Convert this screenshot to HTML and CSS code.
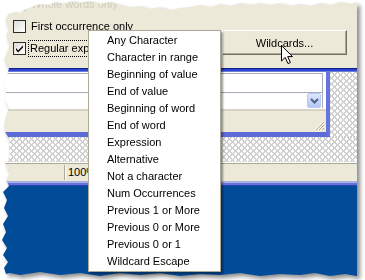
FILE: index.html
```html
<!DOCTYPE html>
<html lang="en">
<head>
    <meta charset="UTF-8">
    <title>Wildcards menu</title>
    <link rel="stylesheet" href="styles.css">
</head>
<body>
    <div class="shot">
        <div class="frame">
            <div class="paper">
                <div class="dialog">
                    <div class="checks">
                        <div class="check faded"><span class="box"></span>Whole words only</div>
                        <div class="check"><span class="box"></span>First occurrence only</div>
                        <div class="check">
                            <span class="box">
                                <svg width="11" height="11" viewBox="0 0 11 11"><path d="M2 5 L4 7.5 L9 2.5 L9 4.5 L4 9.5 L2 7 Z" fill="#000"/></svg>
                            </span>
                            <span class="focus">Regular expressions</span>
                        </div>
                    </div>
                    <div class="side">
                        <button class="btn">Wildcards...</button>
                    </div>
                </div>
                <div class="rule-top"></div>
                <div class="mdi">
                    <div class="child">
                        <div class="fields">
                            <div class="field"></div>
                            <div class="field combo">
                                <span class="drop">
                                    <svg width="9" height="6" viewBox="0 0 9 6"><path d="M1 1 L4.5 4.5 L8 1" fill="none" stroke="#4d6185" stroke-width="2"/></svg>
                                </span>
                            </div>
                        </div>
                        <div class="child-bar">
                            <svg class="grip" width="11" height="11" viewBox="0 0 11 11">
                                <path d="M10 1 L1 10 M10 4 L4 10 M10 7 L7 10" stroke="#fff" stroke-width="1"/>
                                <path d="M10 2 L2 10 M10 5 L5 10 M10 8 L8 10" stroke="#aca899" stroke-width="1"/>
                            </svg>
                        </div>
                    </div>
                    <div class="hatch"></div>
                </div>
                <div class="hatch wide"></div>
                <div class="status">
                    <span class="cell first"></span>
                    <span class="cell">100%</span>
                </div>
                <div class="rule-bottom"></div>
                <div class="desk"></div>
            </div>
        </div>

        <ul class="menu">
            <li>Any Character</li>
            <li>Character in range</li>
            <li>Beginning of value</li>
            <li>End of value</li>
            <li>Beginning of word</li>
            <li>End of word</li>
            <li>Expression</li>
            <li>Alternative</li>
            <li>Not a character</li>
            <li>Num Occurrences</li>
            <li>Previous 1 or More</li>
            <li>Previous 0 or More</li>
            <li>Previous 0 or 1</li>
            <li>Wildcard Escape</li>
        </ul>

        <svg class="cursor" width="13" height="20" viewBox="0 0 13 20">
            <path d="M0.5 0.5 L0.5 16 L4.2 12.4 L7 18.6 L9.4 17.5 L6.7 11.6 L11.5 11.6 Z" fill="#fff" stroke="#000" stroke-width="1" stroke-linejoin="miter"/>
        </svg>
    </div>
</body>
</html>
```

FILE: styles.css
```css
body {
    margin: 0;
    background: #fff;
    font-family: "Liberation Sans", Arial, sans-serif;
    font-size: 11px;
    color: #000;
}
.shot {
    position: relative;
    width: 365px;
    height: 280px;
}
.frame {
    width: 357px;
    filter: drop-shadow(3px 3px 2px rgba(0, 0, 0, 0.45));
}
/* torn edges on top, left and bottom */
.paper {
    width: 357px;
    height: 276px;
    display: flex;
    flex-direction: column;
    overflow: hidden;
    clip-path: polygon(8px 14px, 14px 12px, 20px 13px, 26px 9px, 34px 6px, 40px 4px, 48px 5px, 56px 2px, 64px 4px, 72px 1px, 80px 3px, 90px 1px, 100px 4px, 110px 2px, 120px 5px, 130px 7px, 140px 6px, 150px 9px, 160px 7px, 170px 10px, 180px 8px, 190px 7px, 200px 5px, 210px 7px, 220px 4px, 230px 6px, 240px 3px, 250px 5px, 260px 3px, 270px 5px, 280px 3px, 290px 6px, 300px 4px, 310px 6px, 320px 3px, 330px 5px, 340px 2px, 350px 4px, 357px 2px,
        357px 276px, 345px 274px, 330px 276px, 315px 273px, 300px 275px, 280px 274px, 260px 276px, 240px 273px, 220px 275px, 200px 274px, 180px 276px, 160px 273px, 140px 275px, 120px 273px, 100px 276px, 80px 273px, 60px 275px, 40px 272px, 20px 275px, 10px 273px,
        6px 274px, 4px 268px, 8px 262px, 3px 255px, 7px 248px, 2px 240px, 6px 232px, 3px 224px, 8px 216px, 4px 208px, 7px 200px, 3px 192px, 9px 186px, 6px 180px, 10px 172px, 5px 164px, 10px 156px, 9px 148px, 10px 140px, 5px 132px, 4px 124px, 6px 116px, 9px 108px, 5px 100px, 6px 92px, 5px 84px, 7px 76px, 9px 68px, 4px 60px, 7px 52px, 10px 44px, 6px 36px, 9px 28px, 5px 20px);
}
.dialog {
    height: 68px;
    flex-shrink: 0;
    box-sizing: border-box;
    background: #ece9d8;
    display: flex;
    justify-content: space-between;
    padding: 0 10px 0 13px;
}
.checks {
    display: flex;
    flex-direction: column;
}
.check {
    height: 22px;
    display: flex;
    align-items: center;
    gap: 5px;
    white-space: nowrap;
}
.check.faded {
    margin-top: -7px;
    color: #cfccbd;
}
.box {
    width: 11px;
    height: 11px;
    border: 1px solid #2b2b2b;
    background: linear-gradient(135deg, #dcdcd7, #fff);
    display: flex;
}
.faded .box {
    border-color: #cfccbd;
    background: #f4f2ea;
}
.focus {
    margin-left: -3px;
    border: 1px dotted #000;
    padding: 1px 2px 1px 1px;
    line-height: 13px;
}
.side {
    padding-top: 30px;
}
.btn {
    width: 125px;
    height: 25px;
    font: inherit;
    color: #000;
    background: #ece9d8;
    border: 1px solid;
    border-color: #fff #716f64 #716f64 #fff;
    box-shadow: inset -1px -1px 0 #aca899;
    padding: 0;
}
.rule-top {
    height: 4px;
    flex-shrink: 0;
    background: linear-gradient(#0a1f8a 0 1px, #2d46d0 1px 3px, #6c7bd8 3px);
}
.mdi {
    height: 65px;
    flex-shrink: 0;
    display: flex;
}
.child {
    width: 330px;
    box-sizing: border-box;
    border-right: 4px solid #6574dc;
    border-bottom: 5px solid #5e6cd9;
    box-shadow: inset 0 -1px 0 #8f99e3;
    display: flex;
    flex-direction: column;
}
.fields {
    height: 36px;
    background: #fff;
    padding: 1px 3px 0 0;
    box-sizing: border-box;
}
.field {
    height: 18px;
    border-top: 1px solid #a5acb5;
    border-right: 1px solid #a5acb5;
}
.combo {
    height: 15px;
    display: flex;
    justify-content: flex-end;
    align-items: center;
}
.drop {
    width: 14px;
    height: 15px;
    margin-right: 1px;
    box-sizing: border-box;
    border: 1px solid #b8c9f3;
    border-radius: 2px;
    background: linear-gradient(#dce6fd, #b4c8f6);
    display: flex;
    align-items: center;
    justify-content: center;
}
.child-bar {
    flex: 1;
    background: #ece9d8;
    border-top: 1px solid #fff;
    box-shadow: inset 0 2px 0 #d8d4c4;
    display: flex;
    justify-content: flex-end;
    align-items: flex-end;
}
.grip {
    margin: 0 1px 1px 0;
}
.hatch {
    flex: 1;
    background-color: #fff;
    background-image:
        repeating-linear-gradient(45deg, #cfcfcf 0 1px, transparent 1px 4.24px),
        repeating-linear-gradient(-45deg, #cfcfcf 0 1px, transparent 1px 4.24px);
}
.hatch.wide {
    height: 25px;
    flex: none;
}
.status {
    height: 19px;
    flex-shrink: 0;
    box-sizing: border-box;
    background: #ece9d8;
    border-top: 1px solid #fff;
    box-shadow: inset 0 1px 0 #aca899;
    display: flex;
    align-items: center;
}
.cell {
    height: 15px;
    line-height: 15px;
    padding-left: 3px;
}
.cell.first {
    width: 64px;
    border-right: 1px solid #aca899;
    box-shadow: 1px 0 0 #fff;
    padding: 0;
}
.rule-bottom {
    height: 5px;
    flex-shrink: 0;
    background: linear-gradient(#a9b0e6 0 2px, #6674da 2px 4px, #2e40b8 4px);
}
.desk {
    flex: 1;
    background: #014c99;
}
.menu {
    position: absolute;
    left: 88px;
    top: 30px;
    width: 133px;
    margin: 0;
    padding: 1px 0;
    list-style: none;
    box-sizing: border-box;
    background: #fff;
    border: 1px solid #aca899;
    box-shadow: 2px 2px 2px rgba(0, 0, 0, 0.4);
}
.menu li {
    height: 17px;
    line-height: 17px;
    padding-left: 18px;
    white-space: nowrap;
}
.cursor {
    position: absolute;
    left: 281px;
    top: 45px;
}
```
